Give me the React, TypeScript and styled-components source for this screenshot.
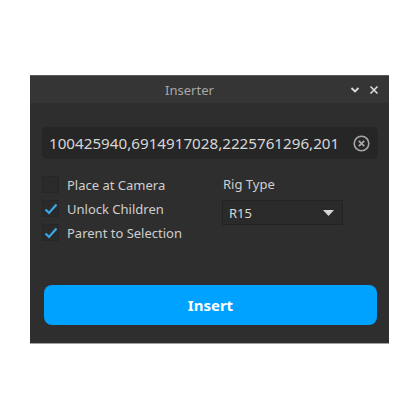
import React from "react";
import styled, { createGlobalStyle } from "styled-components";

const Global = createGlobalStyle`
  html, body {
    margin: 0;
    padding: 0;
    background: #ffffff;
  }
  body {
    font-family: "Noto Sans", "Open Sans", sans-serif;
  }
`;

const Page = styled.div`
  width: 420px;
  height: 420px;
  padding: 75px 0 0 30px;
  box-sizing: border-box;
`;

const Window = styled.div`
  width: 359px;
  height: 269px;
  background: #2e2e2e;
  border-top: 1px solid #5a5a5a;
  border-bottom: 1px solid #a0a0a0;
  box-sizing: border-box;
  display: flex;
  flex-direction: column;
`;

const TitleBar = styled.div`
  height: 27px;
  background: #353535;
  display: flex;
  align-items: center;
  justify-content: center;
  position: relative;
  padding-right: 40px;
  color: #a8a8a8;
  font-size: 13px;
`;

const TitleButtons = styled.div`
  position: absolute;
  right: 10px;
  top: 0;
  height: 100%;
  display: flex;
  align-items: center;
  gap: 9px;
`;

const Body = styled.div`
  padding: 24px 11px 0 12px;
  display: flex;
  flex-direction: column;
`;

const Field = styled.div`
  height: 32px;
  background: #262626;
  border-radius: 5px;
  display: flex;
  align-items: center;
  padding: 0 8px 0 7px;
`;

const FieldText = styled.div`
  flex: 1;
  color: #d6d6d6;
  font-size: 15.2px;
  white-space: nowrap;
  overflow: hidden;
`;

const Options = styled.div`
  display: flex;
  margin-top: 17px;
`;

const CheckList = styled.div`
  width: 180px;
  display: flex;
  flex-direction: column;
  gap: 7px;
`;

const CheckRow = styled.div`
  display: flex;
  align-items: center;
  gap: 8px;
  height: 17px;
  color: #cfcfcf;
  font-size: 13px;
`;

const Box = styled.div`
  width: 17px;
  height: 17px;
  box-sizing: border-box;
  background: #2a2a2a;
  border: 1px solid #262626;
  display: flex;
  align-items: center;
  justify-content: center;
`;

const RigColumn = styled.div`
  display: flex;
  flex-direction: column;
`;

const RigLabel = styled.div`
  color: #cfcfcf;
  font-size: 13px;
  height: 17px;
  line-height: 17px;
  padding-left: 1px;
`;

const Select = styled.div`
  margin-top: 7px;
  width: 121px;
  height: 25px;
  box-sizing: border-box;
  background: #2a2a2a;
  border: 1px solid #232323;
  display: flex;
  align-items: center;
  justify-content: space-between;
  padding: 0 8px 0 6px;
  color: #d6d6d6;
  font-size: 13px;
`;

const InsertButton = styled.button`
  margin: 44px 1px 0 2px;
  height: 40px;
  border: none;
  border-radius: 8px;
  background: #00a2ff;
  color: #ffffff;
  font-family: "Noto Sans", sans-serif;
  font-weight: 700;
  font-size: 15px;
  padding: 0;
`;

const Check = () => (
  <svg width="14" height="12" viewBox="0 0 14 12">
    <path d="M1.5 6.5 L5 10 L12.5 1.5" fill="none" stroke="#3aa7e8" strokeWidth="2.2" />
  </svg>
);

const options = [
  { label: "Place at Camera", checked: false },
  { label: "Unlock Children", checked: true },
  { label: "Parent to Selection", checked: true },
];

export default function App() {
  return (
    <Page>
      <Global />
      <Window>
        <TitleBar>
          Inserter
          <TitleButtons>
            <svg width="10" height="8" viewBox="0 0 10 8">
              <path d="M1.5 2 L5 5.5 L8.5 2" fill="none" stroke="#dcdcdc" strokeWidth="1.8" />
            </svg>
            <svg width="10" height="10" viewBox="0 0 10 10">
              <path d="M1.5 1.5 L8.5 8.5 M8.5 1.5 L1.5 8.5" fill="none" stroke="#dcdcdc" strokeWidth="1.6" />
            </svg>
          </TitleButtons>
        </TitleBar>
        <Body>
          <Field>
            <FieldText>100425940,6914917028,2225761296,201</FieldText>
            <svg width="17" height="17" viewBox="0 0 17 17">
              <circle cx="8.5" cy="8.5" r="7.3" fill="none" stroke="#a6a6a6" strokeWidth="1.6" />
              <path d="M5.8 5.8 L11.2 11.2 M11.2 5.8 L5.8 11.2" stroke="#a6a6a6" strokeWidth="1.9" />
            </svg>
          </Field>
          <Options>
            <CheckList>
              {options.map((o) => (
                <CheckRow key={o.label}>
                  <Box>{o.checked && <Check />}</Box>
                  {o.label}
                </CheckRow>
              ))}
            </CheckList>
            <RigColumn>
              <RigLabel>Rig Type</RigLabel>
              <Select>
                R15
                <svg width="11" height="6" viewBox="0 0 11 6">
                  <path d="M0 0 L11 0 L5.5 6 Z" fill="#d6d6d6" />
                </svg>
              </Select>
            </RigColumn>
          </Options>
          <InsertButton>Insert</InsertButton>
        </Body>
      </Window>
    </Page>
  );
}
